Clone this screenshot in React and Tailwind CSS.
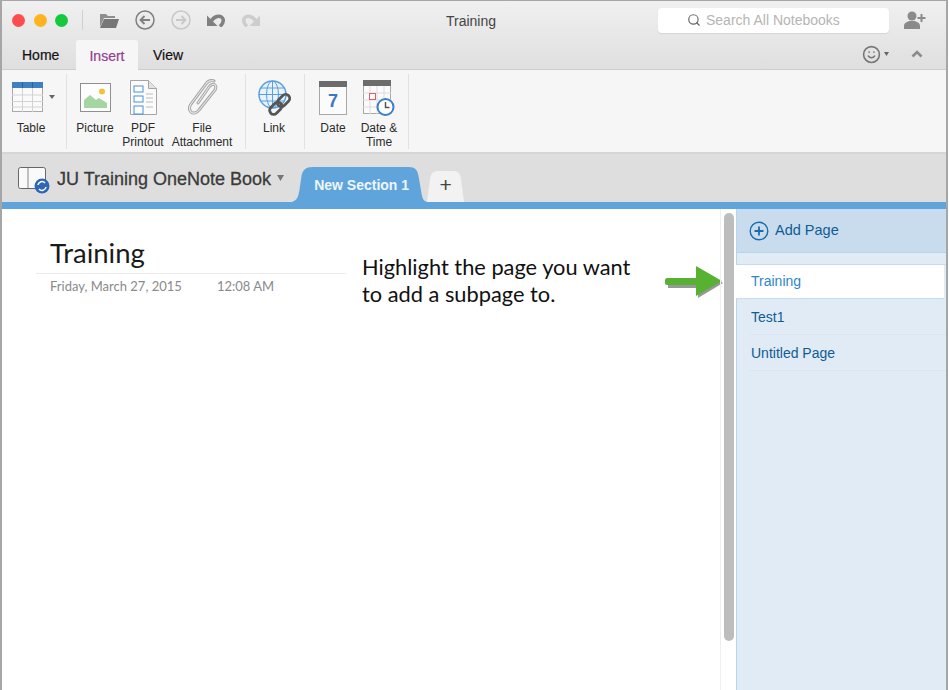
import { Search, Smile } from "lucide-react";

const RibbonItem = ({ width, icon, children }) => (
  <div className={`flex flex-col items-center shrink-0 ${width}`}>
    <div className="h-[43px] mt-[2px] flex items-center justify-center">{icon}</div>
    <div className="mt-[2px] text-center text-[12px] leading-[14px] text-[#2b2b2b] whitespace-pre-line">
      {children}
    </div>
  </div>
);

const TableIcon = () => (
  <div className="flex items-start gap-[5px] ml-[4px]">
    <svg width="32" height="31" viewBox="0 0 32 31">
      <rect x="0.5" y="0.5" width="30" height="29" fill="#fafafa" stroke="#a9a9a9" />
      <rect x="0" y="0" width="31" height="6" fill="#3f7fc4" />
      <path d="M0 13h31M0 19.500h31M0 25h31M10.500 0v30M20.500 0v30" stroke="#d3d3d3" />
      <path d="M10.500 0v6M20.500 0v6" stroke="#2c62a0" />
    </svg>
    <svg width="6" height="4" viewBox="0 0 6 4" className="mt-[13px]">
      <path d="M0 0h6L3 4z" fill="#666" />
    </svg>
  </div>
);

const PictureIcon = () => (
  <svg width="31" height="30" viewBox="0 0 31 30">
    <rect x="0.500" y="0.500" width="30" height="28" fill="#fdfdfd" stroke="#8f8f8f" />
    <path d="M4 25V17l6-5 6 5 3-2 8 5v5z" fill="#a5d6a2" />
    <circle cx="22" cy="8.500" r="3" fill="#f1c33f" />
  </svg>
);

const PdfIcon = () => (
  <svg width="27" height="35" viewBox="0 0 27 35">
    <path d="M.5.500h18l8 8v26H.500z" fill="#fbfbfb" stroke="#a5a5a5" />
    <path d="M18.500.500v8h8" fill="#e3e3e3" stroke="#a5a5a5" />
    <rect x="4" y="6" width="9" height="6" fill="#fff" stroke="#4a90d9" />
    <rect x="4" y="16" width="9" height="6" fill="#fff" stroke="#4a90d9" />
    <rect x="4" y="26" width="9" height="8" fill="#fff" stroke="#4a90d9" />
    <path d="M16 14h7M16 18h7M16 22h7M16 27h7" stroke="#bdbdbd" />
  </svg>
);

const clipPath =
  "M11 24 22 8c2-3 5-3 6-2s1 3 0 5L12 31c-2 3-6 4-8 2s-2-5 0-8L19 5c2-3 5-4 8-3";

const ClipIcon = () => (
  <svg width="31" height="37" viewBox="0 0 31 37" fill="none">
    <path d={clipPath} stroke="#a2a2a2" strokeWidth="3" strokeLinecap="round" />
    <path d={clipPath} stroke="#e6e6e6" strokeWidth="1.200" strokeLinecap="round" />
  </svg>
);

const LinkIcon = () => (
  <svg width="33" height="36" viewBox="0 0 33 36" fill="none">
    <circle cx="14.500" cy="14.500" r="13.500" fill="#e8f2fc" stroke="#5a9fe0" strokeWidth="1.500" />
    <ellipse cx="14.500" cy="14.500" rx="6" ry="13.500" stroke="#5a9fe0" />
    <path d="M1 14.500h27M3 8h23M3 21h23M14.500 1v27" stroke="#5a9fe0" />
    <g transform="rotate(-45 22 24)" stroke="#555" strokeWidth="2.800">
      <rect x="9" y="20" width="14" height="8" rx="4" fill="none" />
      <rect x="20" y="20" width="14" height="8" rx="4" fill="none" />
    </g>
  </svg>
);

const DateIcon = () => (
  <svg width="28" height="36" viewBox="0 0 28 36">
    <rect x=".5" y="1.500" width="27" height="33" fill="#fbfbfb" stroke="#a8a8a8" />
    <rect x="0" y="1" width="28" height="6" fill="#6c6c6c" />
    <text x="14" y="27" textAnchor="middle" fontSize="18" fontWeight="700" fontFamily="Liberation Sans, sans-serif" fill="#3878c4">
      7
    </text>
  </svg>
);

const DateTimeIcon = () => (
  <svg width="32" height="38" viewBox="0 0 32 38" fill="none">
    <rect x=".5" y="1.500" width="27" height="33" fill="#fbfbfb" stroke="#a8a8a8" />
    <rect x="0" y="1" width="28" height="6" fill="#6c6c6c" />
    <path d="M0 14h28M0 21h28M0 28h28M7 7v28M14 7v28M21 7v28" stroke="#dcdcdc" />
    <rect x="6.500" y="14.500" width="6" height="6" fill="#fff" stroke="#e25c6b" />
    <circle cx="22.500" cy="28" r="8" fill="#fff" stroke="#3a7fc8" strokeWidth="2" />
    <path d="M22.500 23v5.500h4" stroke="#555" strokeWidth="1.500" />
  </svg>
);

const UndoIcon = ({ color, className }) => (
  <svg width="19" height="14" viewBox="0 0 19 14" fill="none" className={className}>
    <path d="M0 2.500V13h10.500z" fill={color} />
    <path d="M4 8.500C7 3 13 2 15.500 5 17.500 8 15.500 11 13 13.500" stroke={color} strokeWidth="3.500" />
  </svg>
);

const Divider = () => <div className="w-px h-[75px] bg-[#e2e2e2] shrink-0" />;

const App = () => {
  return (
    <div className="w-[949px] h-[690px] overflow-hidden bg-white">
      <div className="w-[948px] h-[690px] flex flex-col border-t border-x-2 border-[#a6a6a6] font-['Liberation_Sans',Arial,sans-serif]">
        {/* title bar + tabs */}
        <div className="h-[69px] shrink-0 bg-gradient-to-b from-[#f0f0f0] to-[#dfdfdf] border-b border-[#cdcdcd] flex flex-col">
          <div className="h-[38px] flex items-center">
            <div className="flex items-center gap-[8.500px] ml-[10px]">
              <div className="w-[13px] h-[13px] rounded-full bg-[#fc4e50]" />
              <div className="w-[13px] h-[13px] rounded-full bg-[#fdb41e]" />
              <div className="w-[13px] h-[13px] rounded-full bg-[#14c93c]" />
            </div>
            <div className="w-px h-[20px] bg-[#cfcfcf] ml-[14px]" />
            {/* folder */}
            <svg width="21" height="17" viewBox="0 0 21 17" className="ml-[16px]">
              <path d="M1 2h6l2 2h7v2H5L1 15z" fill="#8f8f8f" />
              <path d="M5 7h15l-3 9H1z" fill="#777" />
            </svg>
            {/* back, forward */}
            <svg width="20" height="20" viewBox="0 0 20 20" fill="none" className="ml-[15px]">
              <circle cx="10" cy="10" r="9" stroke="#808080" strokeWidth="1.500" />
              <path d="M15 10H6M9.500 6 5.500 10l4 4" stroke="#808080" strokeWidth="1.800" />
            </svg>
            <svg width="20" height="20" viewBox="0 0 20 20" fill="none" className="ml-[16px]">
              <circle cx="10" cy="10" r="9" stroke="#c8c8c8" strokeWidth="1.500" />
              <path d="M5 10h9M10.500 6l4 4-4 4" stroke="#c8c8c8" strokeWidth="1.800" />
            </svg>
            <UndoIcon color="#808080" className="ml-[16px]" />
            <UndoIcon color="#cdcdcd" className="ml-[15px] -scale-x-100" />
            <div className="ml-[184px] pt-[2px] text-[14px] text-[#444] w-[54px] text-center shrink-0">Training</div>
            <div className="ml-[160px] w-[231px] shrink-0 h-[25px] rounded-[4px] bg-white flex items-center pl-[29px] shadow-[0_1px_1px_#d5d5d5]">
              <Search size={14} className="text-[#666]" />
              <span className="ml-[5px] text-[14px] text-[#b5b5b5]">Search All Notebooks</span>
            </div>
            <svg width="22" height="19" viewBox="0 0 22 19" className="ml-[15px] shrink-0">
              <circle cx="8" cy="5" r="4.500" fill="#8a8a8a" />
              <path d="M0 18v-3c0-3 3-4 5-5h6c2 1 5 2 5 5v3z" fill="#8a8a8a" />
              <path d="M17.500 3v8M13.500 7h8" stroke="#8a8a8a" strokeWidth="2" />
            </svg>
          </div>
          <div className="flex-1 flex items-end">
            <div className="w-[74px] h-[30px] flex items-center pl-[20px] pt-[2px] text-[14px] text-[#111] [-webkit-text-stroke:0.2px_#111]">Home</div>
            <div className="w-[62px] h-[30px] rounded-t-[3px] bg-[#f6f6f6] flex items-center justify-center pt-[2px] text-[14px] text-[#933c93] [-webkit-text-stroke:0.2px_#933c93] -mb-px">
              Insert
            </div>
            <div className="ml-[15px] h-[30px] flex items-center pt-[2px] text-[14px] text-[#111] [-webkit-text-stroke:0.2px_#111]">View</div>
            <div className="ml-auto flex items-center h-[30px] mr-[21px]">
              <Smile size={19} className="text-[#777]" />
              <svg width="5" height="4" viewBox="0 0 5 4" className="ml-[3px]">
                <path d="M0 0h5L2.500 4z" fill="#666" />
              </svg>
              <svg width="12" height="8" viewBox="0 0 12 8" fill="none" className="ml-[22px] mr-[2px]">
                <path d="M1.500 6.500 6 2l4.500 4.500" stroke="#8a8a8a" strokeWidth="2.600" />
              </svg>
            </div>
          </div>
        </div>

        {/* ribbon */}
        <div className="h-[84px] shrink-0 bg-[#f6f6f6] border-b-2 border-[#d6d6d6] flex pt-[4px]">
          <div className="flex w-[64px] shrink-0">
            <RibbonItem width="w-[58px]" icon={<TableIcon />}>Table</RibbonItem>
          </div>
          <Divider />
          <div className="flex w-[178px] shrink-0 pl-[4px]">
            <RibbonItem width="w-[48px]" icon={<PictureIcon />}>Picture</RibbonItem>
            <RibbonItem width="w-[48px]" icon={<PdfIcon />}>{"PDF\nPrintout"}</RibbonItem>
            <RibbonItem width="w-[70px]" icon={<ClipIcon />}>{"File\nAttachment"}</RibbonItem>
          </div>
          <Divider />
          <div className="flex w-[58px] shrink-0">
            <RibbonItem width="w-[56px]" icon={<LinkIcon />}>Link</RibbonItem>
          </div>
          <Divider />
          <div className="flex w-[103px] shrink-0 pl-[6px]">
            <RibbonItem width="w-[44px]" icon={<DateIcon />}>Date</RibbonItem>
            <RibbonItem width="w-[48px]" icon={<DateTimeIcon />}>{"Date &\nTime"}</RibbonItem>
          </div>
          <Divider />
        </div>

        {/* notebook bar */}
        <div className="h-[48px] shrink-0 bg-[#dedede] flex items-end">
          <div className="flex items-center self-center mt-[3px] ml-[16px] shrink-0">
            <svg width="32" height="28" viewBox="0 0 32 28">
              <rect x=".5" y="1.500" width="27" height="21" rx="2" fill="#fafafa" stroke="#666" />
              <path d="M10 2v20" stroke="#888" />
              <circle cx="24" cy="20" r="7.500" fill="#2f66b5" />
              <path d="M20 19a4 4 0 0 1 7-2M28 21a4 4 0 0 1-7 2" fill="none" stroke="#fff" strokeWidth="1.500" />
            </svg>
            <span className="ml-[7px] text-[18px] whitespace-nowrap text-[#3a3a3a] [-webkit-text-stroke:0.3px_#3a3a3a]">JU Training OneNote Book</span>
            <svg width="7" height="6" viewBox="0 0 7 6" className="ml-[6px] -mt-[3px]">
              <path d="M0 0h7L3.500 6z" fill="#777" />
            </svg>
          </div>
          <div className="relative w-[135px] h-[35px] ml-[8px] shrink-0">
            <svg width="135" height="35" viewBox="0 0 130 35" preserveAspectRatio="none" className="absolute inset-0">
              <path d="M0 35C5 33 6 30 7 24L9 10C10 3 13 0 20 0H112C119 0 121 3 122 10L125 28C126 32 127 34 130 35z" fill="#5fa5dc" />
            </svg>
            <div className="relative text-center pt-[8px] pl-[4px] text-[14px] font-bold text-[#eef6fc]">New Section 1</div>
          </div>
          <div className="relative w-[38px] h-[31px] shrink-0">
            <svg width="38" height="31" viewBox="0 0 38 31" className="absolute inset-0">
              <path d="M0 31 3 8C4 2 6 0 12 0H26C31 0 33 2 34 8L37 31z" fill="#f2f2f2" />
            </svg>
            <div className="relative text-center pr-[1px] text-[21px] leading-[28px] text-[#444]">+</div>
          </div>
        </div>
        <div className="h-[7px] shrink-0 bg-[#5fa5dc]" />

        {/* body */}
        <div className="flex-1 flex min-h-0">
          <div className="w-[718px] shrink-0 flex">
            <div className="w-[310px] ml-[34px] shrink-0 font-['Lato',sans-serif]">
              <div className="pt-[26px] pl-[14px] text-[27.500px] leading-[36px] text-[#1a1a1a]">Training</div>
              <div className="border-t border-[#ececec] pl-[14px] mt-[2px] pt-[2px] text-[13px] leading-[20px] text-[#8a8a8a] flex">
                <span className="w-[167px]">Friday, March 27, 2015</span>
                <span>12:08 AM</span>
              </div>
            </div>
            <div className="w-[276px] ml-[16px] mt-[44px] shrink-0 font-['Lato',sans-serif] text-[21.800px] leading-[27px] text-[#111]">
              Highlight the page you want to add a subpage to.
            </div>
            <svg width="60" height="36" viewBox="0 0 60 36" className="ml-[27px] mt-[55px] shrink-0">
              <path d="M3 18h30V5l25 14-25 15V24H3z" fill="#444" opacity="0.550" />
              <path d="M0 16c0-1 1-2 2-2h29V2l26 15-26 15V21H2c-1 0-2-1-2-2z" fill="#56b230" />
            </svg>
          </div>
          <div className="w-[16px] shrink-0 border-l border-[#eeeeee] pl-[3px] pt-[4px]">
            <div className="w-[10px] h-[428px] rounded-full bg-[#bdbdbd]" />
          </div>
          <div className="w-[210px] shrink-0 bg-[#e1ebf6] border-l border-[#b9d3ea] flex flex-col">
            <div className="h-[44px] shrink-0 bg-[#c9dcee] border-b border-[#b9d3ea] flex items-center pl-[12px] pt-[1px] text-[14.500px] text-[#0f5c94]">
              <svg width="20" height="20" viewBox="0 0 20 20" fill="none">
                <circle cx="10" cy="10" r="8.800" stroke="#1a6ca8" strokeWidth="1.400" />
                <path d="M10 5.500v9M5.500 10h9" stroke="#1a6ca8" strokeWidth="1.800" />
              </svg>
              <span className="ml-[6px]">Add Page</span>
            </div>
            <div className="h-[12px] shrink-0 border-b border-[#c7dcef]" />
            <div className="h-[34px] shrink-0 -ml-px mr-[2px] bg-white flex items-center pl-[15px] text-[14px] text-[#2f86c8] border-b border-[#c7dcef]">Training</div>
            <div className="h-[36px] shrink-0 flex items-center ml-[13px] pl-[1px] pt-[2px] text-[14px] text-[#0f5c94] border-b border-[#d8e5f2]">Test1</div>
            <div className="h-[36px] shrink-0 flex items-center ml-[13px] pl-[1px] pt-[1px] text-[14px] text-[#0f5c94] border-b border-[#d8e5f2]">Untitled Page</div>
          </div>
        </div>
      </div>
    </div>
  );
};

export default App;
